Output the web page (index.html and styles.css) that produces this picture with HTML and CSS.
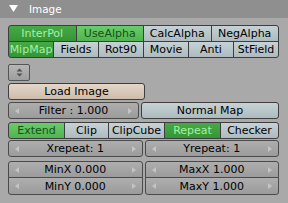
FILE: index.html
```html
<!DOCTYPE html>
<html>
<head>
<meta charset="utf-8">
<link rel="stylesheet" href="styles.css">
</head>
<body>
<div class="panel">
  <div class="header">
    <svg class="tri" width="9" height="7" viewBox="0 0 9 7"><polygon points="0,0 9,0 4.5,7" fill="#ffffff"/></svg>
    <span class="title">Image</span>
  </div>
  <div class="body">
    <div class="row r1">
      <div class="btn green-dark tl">InterPol</div>
      <div class="btn green-light">UseAlpha</div>
      <div class="btn off">CalcAlpha</div>
      <div class="btn off tr">NegAlpha</div>
    </div>
    <div class="row r2">
      <div class="btn green-dark bl">MipMap</div>
      <div class="btn off">Fields</div>
      <div class="btn off">Rot90</div>
      <div class="btn off">Movie</div>
      <div class="btn off">Anti</div>
      <div class="btn off br">StField</div>
    </div>
    <div class="browse">
      <svg width="7" height="9" viewBox="0 0 7 9"><polygon points="0.5,3.5 6.5,3.5 3.5,0.5" fill="#505050"/><polygon points="0.5,5.5 6.5,5.5 3.5,8.5" fill="#505050"/></svg>
    </div>
    <div class="load">Load Image</div>
    <div class="row r-filter">
      <div class="num filter"><span class="arr left"></span><span class="lbl">Filter : 1.000</span><span class="arr right"></span></div>
      <div class="btn off normal rounded">Normal Map</div>
    </div>
    <div class="row r-ext">
      <div class="btn green-light tl bl w57">Extend</div>
      <div class="btn off w44">Clip</div>
      <div class="btn off w57">ClipCube</div>
      <div class="btn green-dark w56">Repeat</div>
      <div class="btn off tr br grow">Checker</div>
    </div>
    <div class="row r-rep">
      <div class="num half"><span class="arr left"></span><span class="lbl">Xrepeat: 1</span><span class="arr right"></span></div>
      <div class="num half"><span class="arr left"></span><span class="lbl">Yrepeat: 1</span><span class="arr right"></span></div>
    </div>
    <div class="minmax">
      <div class="col">
        <div class="num top"><span class="arr left"></span><span class="lbl">MinX 0.000</span><span class="arr right"></span></div>
        <div class="num bottom"><span class="arr left"></span><span class="lbl">MinY 0.000</span><span class="arr right"></span></div>
      </div>
      <div class="col">
        <div class="num top"><span class="arr left"></span><span class="lbl">MaxX 1.000</span><span class="arr right"></span></div>
        <div class="num bottom"><span class="arr left"></span><span class="lbl">MaxY 1.000</span><span class="arr right"></span></div>
      </div>
    </div>
  </div>
</div>
</body>
</html>
```
FILE: styles.css
```css
html, body {
  margin: 0;
  padding: 0;
  background: #a9a9a9;
}
.panel {
  width: 288px;
  height: 203px;
  background: #a9a9a9;
  font-family: "DejaVu Sans", sans-serif;
  font-size: 11px;
  color: #000;
  overflow: hidden;
}
.header {
  height: 18px;
  background: #8f8f8f;
  display: flex;
  align-items: center;
}
.tri {
  margin-left: 9px;
  margin-top: -1px;
}
.title {
  margin-left: 11px;
  color: #ffffff;
  font-size: 10.4px;
  margin-top: -1px;
}
.body {
  padding-left: 8px;
  width: 271px;
}
.row {
  display: flex;
}
.btn, .num, .load, .browse {
  box-sizing: border-box;
  height: 17px;
  border: 1px solid #3e3e3e;
  line-height: 15px;
  text-align: center;
  white-space: nowrap;
  overflow: hidden;
}
.btn {
  flex: 1;
}
.btn + .btn {
  margin-left: -1px;
}
.r1 {
  margin-top: 7px;
}
.r2 {
  margin-top: -1px;
}
.off {
  background: linear-gradient(#c6d2d5, #adbbbf);
}
.green-dark {
  background: linear-gradient(#46aa46, #359535);
  color: #a4f0a4;
}
.green-light {
  background: linear-gradient(#6acb6a, #50b450);
  color: #17501a;
}
.tl { border-top-left-radius: 3px; }
.tr { border-top-right-radius: 3px; }
.bl { border-bottom-left-radius: 3px; }
.br { border-bottom-right-radius: 3px; }
.rounded { border-radius: 3px; }
.browse {
  margin-top: 6px;
  width: 22px;
  border-color: #555;
  border-radius: 2px;
  background: linear-gradient(#b6b6b6, #9e9e9e);
  display: flex;
  align-items: center;
  justify-content: center;
}
.load {
  margin-top: 2px;
  width: 137px;
  border-radius: 3px;
  background: linear-gradient(#e3d6c8, #cdbcab);
}
.r-filter {
  margin-top: 2px;
}
.num {
  display: flex;
  align-items: center;
  justify-content: space-between;
  border-color: #4a4a4a;
  border-radius: 3px;
  background: linear-gradient(#aeaeae, #9b9b9b);
  padding: 0 6px;
}
.num .lbl {
  flex: 1;
  text-align: center;
}
.arr {
  width: 0;
  height: 0;
  border-top: 3px solid transparent;
  border-bottom: 3px solid transparent;
}
.arr.left {
  border-right: 4px solid #c4c4c4;
}
.arr.right {
  border-left: 4px solid #c4c4c4;
}
.filter {
  width: 131px;
}
.normal {
  margin-left: 2px;
}
.r-ext {
  margin-top: 3px;
}
.w57 { flex: 0 0 57px; }
.w56 { flex: 0 0 57px; }
.w44 { flex: 0 0 45px; }
.grow { flex: 1; }
.r-rep {
  margin-top: 1px;
  gap: 2px;
}
.half {
  flex: 1;
}
.minmax {
  margin-top: 4px;
  display: flex;
  gap: 2px;
}
.col {
  flex: 1;
  display: flex;
  flex-direction: column;
}
.num.top {
  border-bottom-left-radius: 0;
  border-bottom-right-radius: 0;
}
.num.bottom {
  margin-top: -1px;
  height: 18px;
  border-top-left-radius: 0;
  border-top-right-radius: 0;
}
```
